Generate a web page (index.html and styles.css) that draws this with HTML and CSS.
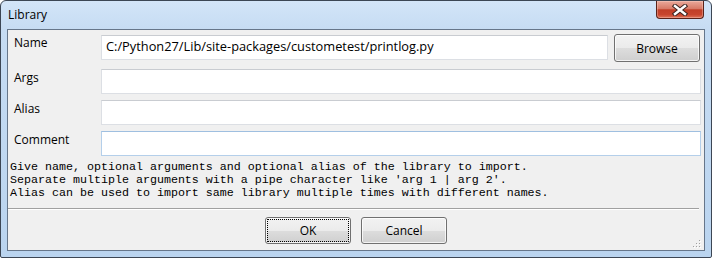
FILE: index.html
```html
<!DOCTYPE html>
<html lang="en">
<head>
  <meta charset="UTF-8">
  <title>Library</title>
  <link rel="stylesheet" href="styles.css">
</head>
<body>
  <div class="window">
    <div class="titlebar">
      <span class="title">Library</span>
      <button class="close" type="button">
        <svg width="16" height="12" viewBox="0 0 16 12">
          <path d="M3 2 L13 10 M13 2 L3 10" stroke="#3b2420" stroke-width="4.4" stroke-linecap="square"/>
          <path d="M3 2 L13 10 M13 2 L3 10" stroke="#ffffff" stroke-width="2.4" stroke-linecap="square"/>
        </svg>
      </button>
    </div>

    <div class="client">
      <div class="form">
        <label class="label">Name</label>
        <input class="field name-field" type="text" value="C:/Python27/Lib/site-packages/custometest/printlog.py">
        <button class="btn browse" type="button">Browse</button>

        <label class="label">Args</label>
        <input class="field wide" type="text">

        <label class="label">Alias</label>
        <input class="field wide" type="text">

        <label class="label">Comment</label>
        <input class="field wide hover" type="text">
      </div>

      <pre class="help">Give name, optional arguments and optional alias of the library to import.
Separate multiple arguments with a pipe character like 'arg 1 | arg 2'.
Alias can be used to import same library multiple times with different names.</pre>

      <div class="separator"></div>

      <div class="actions">
        <button class="btn default" type="button">OK</button>
        <button class="btn" type="button">Cancel</button>
      </div>

      <!-- size grip in the corner -->
      <svg class="grip" width="8" height="8" viewBox="0 0 8 8">
        <rect x="6" y="0" width="1" height="1" fill="#a0a0a0"/>
        <rect x="3" y="3" width="1" height="1" fill="#a0a0a0"/>
        <rect x="6" y="3" width="1" height="1" fill="#a0a0a0"/>
        <rect x="0" y="6" width="1" height="1" fill="#a0a0a0"/>
        <rect x="3" y="6" width="1" height="1" fill="#a0a0a0"/>
        <rect x="6" y="6" width="1" height="1" fill="#a0a0a0"/>
        <rect x="7" y="1" width="1" height="1" fill="#ffffff"/>
        <rect x="4" y="4" width="1" height="1" fill="#ffffff"/>
        <rect x="7" y="4" width="1" height="1" fill="#ffffff"/>
        <rect x="1" y="7" width="1" height="1" fill="#ffffff"/>
        <rect x="4" y="7" width="1" height="1" fill="#ffffff"/>
        <rect x="7" y="7" width="1" height="1" fill="#ffffff"/>
      </svg>
    </div>
  </div>
</body>
</html>
```

FILE: styles.css
```css
* {
  box-sizing: border-box;
}

body {
  margin: 0;
  background: #ffffff;
  font-family: 'Open Sans', 'Noto Sans', sans-serif;
  font-size: 12px;
  color: #000;
}

.window {
  width: 712px;
  height: 258px;
  display: flex;
  flex-direction: column;
  border: 1px solid #3c4654;
  border-radius: 6px 6px 2px 2px;
  background: linear-gradient(#d3e5f8, #c6dcf3 28px, #bad4ef);
}

.titlebar {
  height: 28px;
  display: flex;
  justify-content: space-between;
  align-items: flex-start;
  flex-shrink: 0;
}

.title {
  padding-left: 7px;
  line-height: 28px;
}

.close {
  width: 48px;
  height: 18px;
  margin-right: 7px;
  padding: 0;
  display: flex;
  align-items: center;
  justify-content: center;
  border: 1px solid #5a2219;
  border-top: none;
  border-radius: 0 0 4px 4px;
  background: linear-gradient(#eaa99b, #d77a67 45%, #c13e27 52%, #c8452d 80%, #de7258);
  box-shadow: inset 0 0 0 1px rgba(255, 220, 210, 0.35);
}

.client {
  position: relative;
  flex: 1;
  margin: 0 6px 6px 6px;
  border: 1px solid #66768a;
  background: #f0f0f0;
  display: flex;
  flex-direction: column;
}

.form {
  display: grid;
  grid-template-columns: 81px 1fr 87px;
  grid-template-rows: 29px 25px 25px 25px;
  column-gap: 6px;
  row-gap: 6px;
  padding: 4px 3px 0 6px;
}

.label {
  padding-top: 1px;
  line-height: 16px;
}

.field {
  height: 25px;
  padding: 0 4px;
  border: 1px solid #dcdfe4;
  border-top-color: #c9ccd1;
  background: #fff;
  font-family: inherit;
  font-size: 12.8px;
  color: #000;
  outline: none;
}

.name-field {
  margin-top: 1px;
  padding-bottom: 3px;
}

.wide {
  grid-column: 2 / 4;
}

.hover {
  border-color: #b4cfea;
  border-top-color: #9fbfe0;
}

.btn {
  height: 27px;
  width: 86px;
  padding: 0;
  border: 1px solid #707070;
  border-radius: 3px;
  background: linear-gradient(#f2f2f2, #ebebeb 50%, #dddddd 51%, #cfcfcf);
  box-shadow: inset 0 0 0 1px rgba(255, 255, 255, 0.75);
  font-family: inherit;
  font-size: 12px;
  color: #000;
}

.browse {
  height: 28px;
}

.default {
  outline: 1px dotted #000;
  outline-offset: -3px;
}

.help {
  margin: 5px 0 0 2px;
  font-family: 'Liberation Mono', monospace;
  font-size: 11.67px;
  line-height: 13px;
  color: #000;
}

.separator {
  margin: 8px 5px 0 0;
  height: 2px;
  border-top: 1px solid #a0a0a0;
  border-bottom: 1px solid #ffffff;
}

.actions {
  margin-top: 7px;
  display: flex;
  justify-content: center;
  gap: 10px;
}

.grip {
  position: absolute;
  right: 3px;
  bottom: 2px;
}
```
